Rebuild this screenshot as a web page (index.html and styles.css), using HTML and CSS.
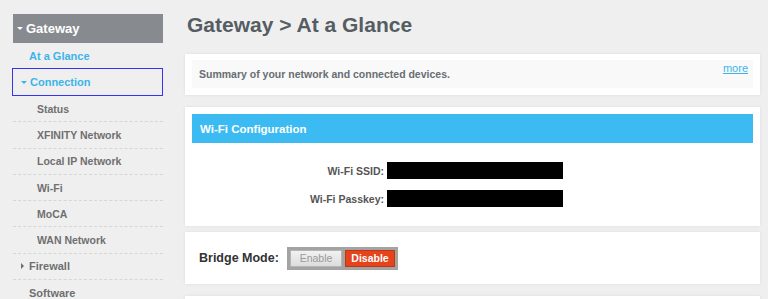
FILE: index.html
```html
<!DOCTYPE html>
<html lang="en">
<head>
    <meta charset="UTF-8">
    <meta name="viewport" content="width=device-width, initial-scale=1.0">
    <title>Gateway > At a Glance</title>
    <link rel="stylesheet" href="styles.css">
</head>
<body>
    <div class="page">
        <div class="sidebar">
            <div class="nav-head"><span class="caret-down"></span>Gateway</div>
            <div class="nav-item active">At a Glance</div>
            <div class="nav-item open"><span class="caret-down blue"></span>Connection</div>
            <div class="sub-item">Status</div>
            <div class="sub-item">XFINITY Network</div>
            <div class="sub-item">Local IP Network</div>
            <div class="sub-item">Wi-Fi</div>
            <div class="sub-item">MoCA</div>
            <div class="sub-item">WAN Network</div>
            <div class="nav-item closed"><span class="caret-right"></span>Firewall</div>
            <div class="nav-item">Software</div>
        </div>

        <div class="main">
            <h1>Gateway &gt; At a Glance</h1>

            <div class="card summary-card">
                <div class="summary">
                    <span class="summary-text">Summary of your network and connected devices.</span>
                    <a href="#" class="more">more</a>
                </div>
            </div>

            <div class="card wifi-card">
                <div class="card-head">Wi-Fi Configuration</div>
                <div class="wifi-body">
                    <div class="wifi-row">
                        <span class="wifi-label">Wi-Fi SSID:</span>
                        <span class="redacted"></span>
                    </div>
                    <div class="wifi-row">
                        <span class="wifi-label">Wi-Fi Passkey:</span>
                        <span class="redacted"></span>
                    </div>
                </div>
            </div>

            <div class="card bridge-card">
                <span class="bridge-label">Bridge Mode:</span>
                <div class="toggle">
                    <button class="btn-enable">Enable</button>
                    <button class="btn-disable">Disable</button>
                </div>
            </div>

            <div class="card next-card"></div>
        </div>
    </div>
</body>
</html>
```

FILE: styles.css
```css
body {
    font-family: "Liberation Sans", Arial, sans-serif;
    background-color: #efefef;
    margin: 0;
    padding: 0;
    overflow: hidden;
}
.page {
    display: flex;
    align-items: flex-start;
    padding: 14px 0 0 13px;
    gap: 22px;
}
.sidebar {
    width: 150px;
    flex-shrink: 0;
}
.nav-head {
    display: flex;
    align-items: center;
    height: 29px;
    padding-left: 4px;
    background: #878b8f;
    color: white;
    font-size: 13px;
    font-weight: bold;
}
.caret-down {
    display: inline-block;
    width: 0;
    height: 0;
    border-left: 3px solid transparent;
    border-right: 3px solid transparent;
    border-top: 3px solid white;
    margin-right: 3px;
}
.caret-down.blue {
    border-top-color: #3ab5ea;
    margin-right: 3px;
}
.caret-right {
    display: inline-block;
    width: 0;
    height: 0;
    border-top: 3px solid transparent;
    border-bottom: 3px solid transparent;
    border-left: 3px solid #6f6f6f;
    margin-right: 5px;
}
.nav-item {
    display: flex;
    align-items: center;
    height: 25px;
    padding-left: 16px;
    color: #6f6f6f;
    font-size: 11px;
    font-weight: bold;
}
.nav-item.active {
    color: #3ab5ea;
}
.nav-item.open {
    height: 26px;
    margin-left: -1px;
    padding-left: 8px;
    border: 1px solid #3333f0;
    color: #3ab5ea;
}
.nav-item.closed {
    padding-left: 8px;
    height: 25.3px;
    border-bottom: 1px dashed #d6d6d6;
}
.sub-item {
    display: flex;
    align-items: center;
    height: 25.3px;
    padding-left: 24px;
    border-bottom: 1px dashed #d6d6d6;
    color: #6f6f6f;
    font-size: 10.5px;
    font-weight: bold;
}
.main {
    width: 575px;
    flex-shrink: 0;
}
h1 {
    margin: 0 0 18px 2px;
    font-size: 21px;
    line-height: 22px;
    color: #555d63;
}
.card {
    background: white;
    box-shadow: 0 0 3px rgba(0, 0, 0, 0.08);
}
.summary-card {
    padding: 6px 7px 7px;
}
.summary {
    display: flex;
    justify-content: space-between;
    align-items: flex-start;
    height: 28px;
    padding: 0 5px 0 7px;
    background: #f9f9f9;
}
.summary-text {
    padding-top: 8px;
    font-size: 10.5px;
    font-weight: bold;
    color: #676e73;
}
.more {
    padding-top: 2px;
    font-size: 11px;
    color: #3ab5ea;
}
.wifi-card {
    margin-top: 12px;
    padding: 7px 7px 0;
}
.card-head {
    display: flex;
    align-items: center;
    height: 29px;
    padding-left: 8px;
    background: #3cbbf2;
    color: white;
    font-size: 11.5px;
    font-weight: bold;
}
.wifi-body {
    padding: 19px 0 19px;
}
.wifi-row {
    display: flex;
    align-items: center;
    gap: 3px;
    height: 17px;
}
.wifi-row + .wifi-row {
    margin-top: 11px;
}
.wifi-label {
    width: 192px;
    text-align: right;
    font-size: 10.5px;
    font-weight: bold;
    color: #555;
}
.redacted {
    width: 176px;
    height: 17px;
    background: black;
}
.bridge-card {
    display: flex;
    align-items: center;
    margin-top: 6px;
    height: 52px;
    padding-left: 14px;
}
.bridge-label {
    width: 88px;
    font-size: 12.5px;
    font-weight: bold;
    color: #333;
}
.toggle {
    display: flex;
    gap: 3px;
    padding: 3px;
    background: #a3a3a3;
}
.toggle button {
    height: 17px;
    padding: 0;
    border: 1px solid #b5b5b5;
    font-family: "Liberation Sans", Arial, sans-serif;
    font-size: 10.5px;
    cursor: pointer;
}
.btn-enable {
    width: 52px;
    background: linear-gradient(#f2f2f2, #dcdcdc);
    color: #9a9a9a;
}
.btn-disable {
    width: 50px;
    background: #e5431c;
    border-color: #c23512 !important;
    color: white;
    font-weight: bold;
}
.next-card {
    margin-top: 12px;
    height: 40px;
}
```
